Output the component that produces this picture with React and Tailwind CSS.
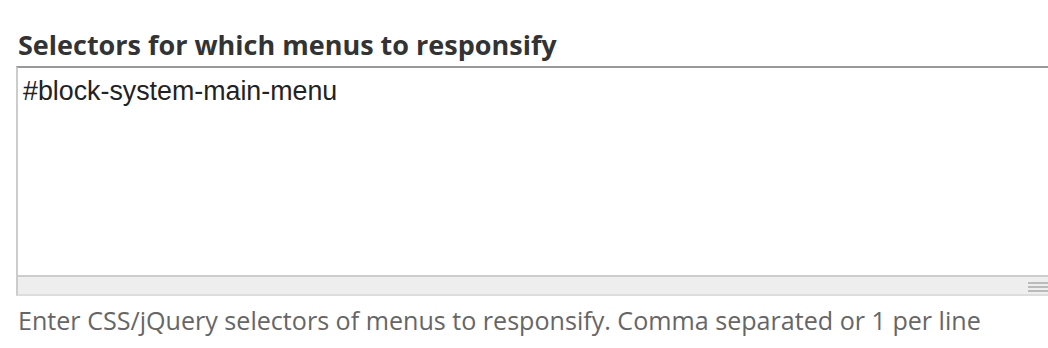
export default function App() {
  return (
    <div className="w-[1048px] h-[348px] bg-white overflow-hidden pl-[16px] pt-[26px]">
      <label className="block pl-[2px] text-[27px] leading-[37px] font-bold text-[#333] font-['Open_Sans',sans-serif]">
        Selectors for which menus to responsify
      </label>
      <div className="w-[1040px] mt-[3px]">
        <div className="h-[211px] bg-white border-t-2 border-t-[#999] border-l-2 border-l-[#ccc] border-b-2 border-b-[#ccc] px-[5px] pt-[7px] text-[26.8px] leading-[32px] text-[#222] font-['Liberation_Sans',Arial,sans-serif]">
          #block-system-main-menu
        </div>
        <div className="relative h-[19px] bg-[#eee] border-l-2 border-l-[#ccc] border-b-2 border-b-[#ddd]">
          <div className="absolute right-[8px] top-[5px] w-[20px] flex flex-col gap-[2px]">
            <div className="h-[2px] bg-[#bbb]" />
            <div className="h-[2px] bg-[#bbb]" />
            <div className="h-[2px] bg-[#bbb]" />
          </div>
        </div>
      </div>
      <p className="pl-[2px] mt-[7px] text-[25.1px] leading-[34px] text-[#666] font-['Open_Sans',sans-serif]">
        Enter CSS/jQuery selectors of menus to responsify. Comma separated or 1 per line
      </p>
    </div>
  );
}
